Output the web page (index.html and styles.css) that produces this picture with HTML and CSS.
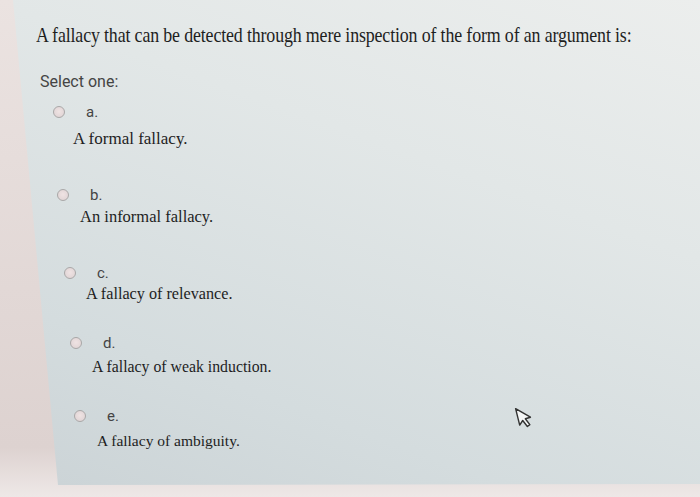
FILE: index.html
```html
<!DOCTYPE html>
<html>
<head>
<meta charset="utf-8">
<link rel="stylesheet" href="styles.css">
</head>
<body>
<div class="screen">
  <div class="panel">
    <p class="question">A fallacy that can be detected through mere inspection of the form of an argument is:</p>
    <p class="prompt">Select one:</p>
    <div class="options">
      <div class="opt opt-a">
        <div class="head"><span class="radio"></span><span class="label">a.</span></div>
        <div class="answer">A formal fallacy.</div>
      </div>
      <div class="opt opt-b">
        <div class="head"><span class="radio"></span><span class="label">b.</span></div>
        <div class="answer">An informal fallacy.</div>
      </div>
      <div class="opt opt-c">
        <div class="head"><span class="radio"></span><span class="label">c.</span></div>
        <div class="answer">A fallacy of relevance.</div>
      </div>
      <div class="opt opt-d">
        <div class="head"><span class="radio"></span><span class="label">d.</span></div>
        <div class="answer">A fallacy of weak induction.</div>
      </div>
      <div class="opt opt-e">
        <div class="head"><span class="radio"></span><span class="label">e.</span></div>
        <div class="answer">A fallacy of ambiguity.</div>
      </div>
    </div>
    <svg class="cursor" width="18" height="24" viewBox="0 0 16 22">
      <path d="M1.5 1.5 L1.5 17 L5.2 13.6 L8 20 L10.6 18.9 L7.9 12.6 L12.8 12.4 Z" fill="#f4f6f6" stroke="#333" stroke-width="1.3" stroke-linejoin="round"/>
    </svg>
  </div>
</div>
</body>
</html>
```

FILE: styles.css
```css
html, body {
  margin: 0;
  padding: 0;
}
body {
  width: 700px;
  height: 497px;
  overflow: hidden;
  background: linear-gradient(180deg, #ebe3e1 0%, #ddd2d0 90%, #eee8e7 100%);
}
.screen {
  width: 700px;
  height: 497px;
  position: relative;
}
.panel {
  position: relative;
  height: 485px;
  box-sizing: border-box;
  padding: 22px 0 0 36px;
  background: linear-gradient(200deg, #eceeed 0%, #e2e7e7 35%, #d4dcde 75%, #cbd3d6 100%);
  clip-path: polygon(13px 0, 100% 0, 100% 484px, 58px 485px);
}
.question {
  margin: 0;
  font-family: "Liberation Serif", "Times New Roman", serif;
  font-size: 17.9px;
  line-height: 22px;
  color: #1e1e1e;
  letter-spacing: -0.15px;
  transform: scaleY(1.15);
  transform-origin: left top;
}
.prompt {
  margin: 28px 0 0 4px;
  font-family: Roboto, "Liberation Sans", sans-serif;
  font-size: 16px;
  line-height: 20px;
  color: #444;
}
.options {
  display: flex;
  flex-direction: column;
  margin-top: 12px;
}
.opt {
  display: flex;
  flex-direction: column;
}
.head {
  display: flex;
  align-items: center;
  height: 16px;
}
.radio {
  width: 12px;
  height: 12px;
  border-radius: 50%;
  border: 1px solid #a9a7a7;
  background: radial-gradient(circle at 50% 45%, #efe3e3 0%, #ddd1d2 100%);
  box-sizing: border-box;
}
.label {
  margin-left: 21px;
  font-family: Roboto, "Liberation Sans", sans-serif;
  font-size: 15px;
  color: #444;
}
.answer {
  line-height: 20px;
  font-family: "Liberation Serif", "Times New Roman", serif;
  color: #1e1e1e;
}
.opt-a { margin-left: 17px; }
.opt-a .answer { margin-left: 20px; margin-top: 9px; font-size: 17px; }
.opt-b { margin-left: 21px; margin-top: 38px; }
.opt-b .answer { margin-left: 23px; margin-top: 4px; font-size: 16.5px; }
.opt-c { margin-left: 28px; margin-top: 38px; }
.opt-c .answer { margin-left: 22px; margin-top: 3px; font-size: 16.2px; }
.opt-d { margin-left: 34px; margin-top: 31px; }
.opt-d .answer { margin-left: 22px; margin-top: 6px; font-size: 15.8px; }
.opt-e { margin-left: 38px; margin-top: 31px; }
.opt-e .answer { margin-left: 23px; margin-top: 7px; font-size: 15.5px; }
.cursor {
  position: absolute;
  left: 516px;
  top: 405px;
  transform: rotate(-14deg);
}
```
